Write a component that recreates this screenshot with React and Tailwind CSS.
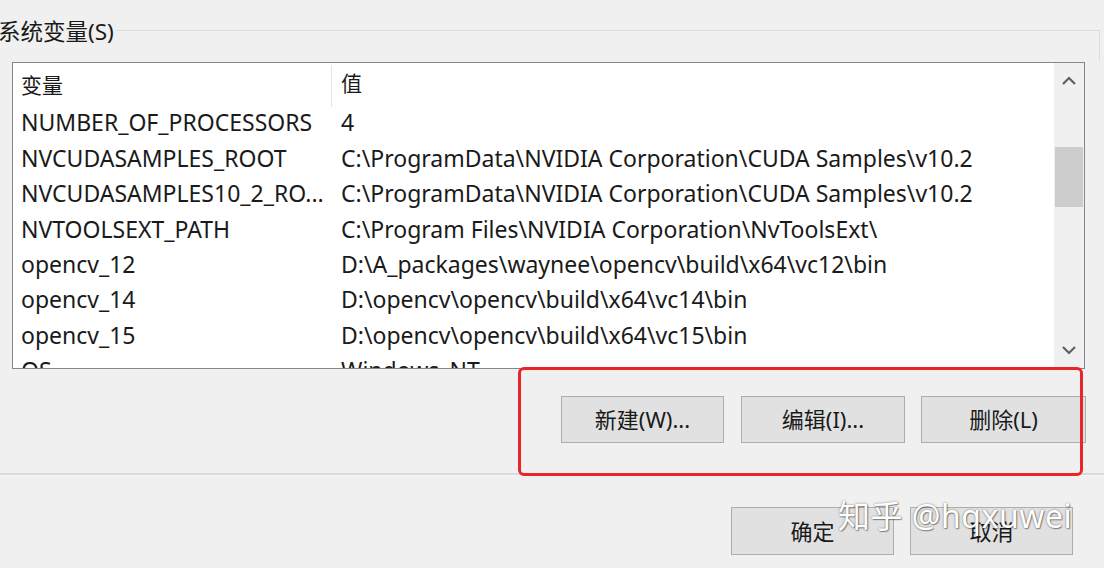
import React from 'react';

const rows = [
  ['NUMBER_OF_PROCESSORS', '4'],
  ['NVCUDASAMPLES_ROOT', 'C:\\ProgramData\\NVIDIA Corporation\\CUDA Samples\\v10.2'],
  ['NVCUDASAMPLES10_2_RO...', 'C:\\ProgramData\\NVIDIA Corporation\\CUDA Samples\\v10.2'],
  ['NVTOOLSEXT_PATH', 'C:\\Program Files\\NVIDIA Corporation\\NvToolsExt\\'],
  ['opencv_12', 'D:\\A_packages\\waynee\\opencv\\build\\x64\\vc12\\bin'],
  ['opencv_14', 'D:\\opencv\\opencv\\build\\x64\\vc14\\bin'],
  ['opencv_15', 'D:\\opencv\\opencv\\build\\x64\\vc15\\bin'],
  ['OS', 'Windows_NT'],
];

const font = {
  fontFamily: '"Noto Sans", "Noto Sans CJK SC", sans-serif',
};

// Win10 style push button
const WinButton = ({ children, className = '' }) => (
  <div
    className={`h-[47px] flex items-center justify-center border border-[#adadad] bg-[#e1e1e1] text-[22px] text-[#1a1a1a] ${className}`}
  >
    {children}
  </div>
);

const Chevron = ({ up }) => (
  <svg width="16" height="10" viewBox="0 0 16 10" className="text-[#606060]">
    <path
      d={up ? 'M2 8 L8 2 L14 8' : 'M2 2 L8 8 L14 2'}
      fill="none"
      stroke="currentColor"
      strokeWidth="2.2"
    />
  </svg>
);

export default function App() {
  return (
    <div
      className="relative w-[1104px] h-[568px] overflow-hidden bg-[#f0f0f0] text-[#1a1a1a]"
      style={font}
    >
      {/* Group box */}
      <div className="flex flex-col">
        <div className="flex items-center h-[62px] pb-[1px]">
          <span className="text-[22.5px] leading-none ml-[-2px] pr-[2px] pt-[3px]">系统变量(S)</span>
          <div className="flex-1 self-stretch flex flex-col">
            <div className="h-[30px]" />
            <div className="flex-1 border-t border-r border-[#dcdcdc] mr-[4px]" />
          </div>
        </div>

        {/* List view */}
        <div className="ml-[12px] w-[1073px] h-[307px] border border-[#828790] bg-white flex overflow-hidden">
          <div className="flex-1 overflow-hidden">
            <div className="flex h-[42px] items-center text-[21px]">
              <div className="w-[319px] pl-[8px] h-full flex items-center border-r border-[#e5e5e5] mt-[4px]">变量</div>
              <div className="pl-[9px]">值</div>
            </div>
            {rows.map(([k, v]) => (
              <div key={k} className="flex h-[35.4px] items-center text-[23px] whitespace-nowrap">
                <div className="w-[319px] pl-[8px]">{k}</div>
                <div className="pl-[9px]">{v}</div>
              </div>
            ))}
          </div>
          {/* Scrollbar */}
          <div className="w-[30px] bg-[#f0f0f0] flex flex-col items-center">
            <div className="h-[36px] flex items-center justify-center">
              <Chevron up />
            </div>
            <div className="mt-[48px] w-[28px] h-[60px] bg-[#cdcdcd]" />
            <div className="flex-1" />
            <div className="h-[36px] flex items-center justify-center">
              <Chevron />
            </div>
          </div>
        </div>

        {/* Action buttons */}
        <div className="flex mt-[27px] ml-[561px] gap-[17px]">
          <WinButton className="w-[163px]">新建(W)...</WinButton>
          <WinButton className="w-[164px]">编辑(I)...</WinButton>
          <WinButton className="w-[165px] -ml-[1px]">删除(L)</WinButton>
        </div>

        {/* Separator */}
        <div className="mt-[30px] h-[3px] border-t-2 border-[#d9d9d9] border-b border-b-[#f7f7f7]" />

        {/* Dialog buttons */}
        <div className="flex mt-[31px] ml-[731px] gap-[16px]">
          <WinButton className="w-[163px] h-[48px]">确定</WinButton>
          <WinButton className="w-[163px] h-[48px]">取消</WinButton>
        </div>
      </div>

      {/* Red annotation box */}
      <div className="absolute left-[518px] top-[367px] w-[565px] h-[109px] border-[3px] border-[#e8262a] rounded-[6px]" />

      {/* Watermark */}
      <div
        className="absolute left-[838px] top-[492px] text-[32px] text-white whitespace-nowrap tracking-[0.5px]"
        style={{ textShadow: '0 0 2px rgba(0,0,0,0.5), 1px 1px 1px rgba(0,0,0,0.35)' }}
      >
        知乎 @hqxuwei
      </div>
    </div>
  );
}
